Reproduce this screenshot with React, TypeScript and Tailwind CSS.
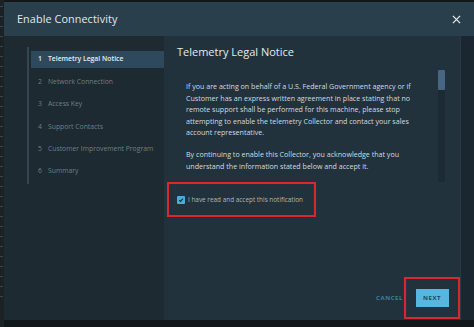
import React from "react";

const steps = [
  "Telemetry Legal Notice",
  "Network Connection",
  "Access Key",
  "Support Contacts",
  "Customer Improvement Program",
  "Summary",
];

const App = () => {
  return (
    <div
      className="w-[474px] h-[327px] bg-[#11171b] flex overflow-hidden"
      style={{ fontFamily: '"Open Sans", "Liberation Sans", sans-serif' }}
    >
      {/* background app strip */}
      <div className="w-[4px] h-full bg-[#1a2226] flex flex-col gap-[9px] pt-[6px]">
        {Array.from({ length: 30 }).map((_, i) => (
          <div key={i} className="h-[1px] w-[3px] bg-[#3b464c]" />
        ))}
      </div>

      <div className="w-[470px] h-[318px] mt-[2px] flex flex-col">
        {/* header */}
        <div className="h-[34px] bg-[#2a3f4c] flex items-center justify-between pl-[13px] pr-[13px]">
          <div className="text-[10.8px] text-[#e3e9ed] tracking-[0.1px]">Enable Connectivity</div>
          <svg width="9" height="9" viewBox="0 0 10 10">
            <path d="M1 1L9 9M9 1L1 9" stroke="#e6ecef" strokeWidth="1.4" />
          </svg>
        </div>

        {/* body */}
        <div className="flex-1 flex">
          {/* sidebar */}
          <div className="w-[160px] bg-[#1d2a32] pt-[11px] pl-[23px]">
            <div className="border-l-[2px] border-[#36454f] pl-[2px] pt-[4px] pb-[4px] flex flex-col gap-[5.4px]">
              {steps.map((s, i) =>
                i === 0 ? (
                  <div
                    key={s}
                    className="h-[17px] bg-[#2e495b] flex items-center pl-[7px] text-[6.8px] font-semibold text-[#e8eef2] whitespace-nowrap"
                  >
                    <span className="w-[10px]">{i + 1}</span>
                    <span>{s}</span>
                  </div>
                ) : (
                  <div
                    key={s}
                    className="h-[17px] flex items-center pl-[7px] text-[6.8px] text-[#6f7e87] whitespace-nowrap"
                  >
                    <span className="w-[10px]">{i + 1}</span>
                    <span>{s}</span>
                  </div>
                )
              )}
            </div>
          </div>

          {/* main */}
          <div className="flex-1 bg-[#21323c] flex flex-col pl-[13px] pr-[15px]">
            <div className="text-[11px] text-[#e3e9ed] mt-[7px] leading-[18px]">Telemetry Legal Notice</div>

            <div className="flex mt-[9px] h-[112px]">
              <div className="flex-1 pl-[9px] pr-[14px] pt-[11px] text-[7.1px] leading-[11.5px] text-[#d3dbe0]">
                <p>
                  If you are acting on behalf of a U.S. Federal Government agency or if Customer has an express written
                  agreement in place stating that no remote support shall be performed for this machine, please stop
                  attempting to enable the telemetry Collector and contact your sales account representative.
                </p>
                <p className="mt-[10.5px]">
                  By continuing to enable this Collector, you acknowledge that you understand the information stated
                  below and accept it.
                </p>
              </div>
              <div className="w-[7px] bg-[#1c2a33] flex flex-col">
                <div className="h-[20px] bg-[#466684] rounded-[1px]" />
              </div>
            </div>

            <div className="ml-[-10px] w-[149px] h-[35px] border-[2px] border-[#db2530] flex items-center pl-[8px] gap-[3px]">
              <div className="w-[8px] h-[8px] bg-[#4aaed9] rounded-[1px] flex items-center justify-center">
                <svg width="6" height="6" viewBox="0 0 10 10">
                  <path d="M2 5.2L4.2 7.4L8.2 2.8" stroke="#0f2a3a" strokeWidth="1.8" fill="none" />
                </svg>
              </div>
              <span className="text-[6.4px] text-[#a9b6be]">I have read and accept this notification</span>
            </div>

            <div className="flex-1 flex items-end justify-end">
              <div className="flex items-center mb-[1px] mr-[-15px]">
                <span className="text-[6px] font-bold tracking-[0.6px] text-[#3f7fa6] mr-[1px]">CANCEL</span>
                <div className="w-[56px] h-[42px] border-[2px] border-[#db2530] flex items-center justify-center">
                  <div className="w-[33px] h-[18px] bg-[#57b6df] flex items-center justify-center text-[6px] font-bold tracking-[0.6px] text-[#1b4662]">
                    NEXT
                  </div>
                </div>
              </div>
            </div>
          </div>

          {/* right gutter */}
          <div className="w-[14px] bg-[#1b2730] border-l border-[#2a3943]" />
        </div>
      </div>
    </div>
  );
};

export default App;
